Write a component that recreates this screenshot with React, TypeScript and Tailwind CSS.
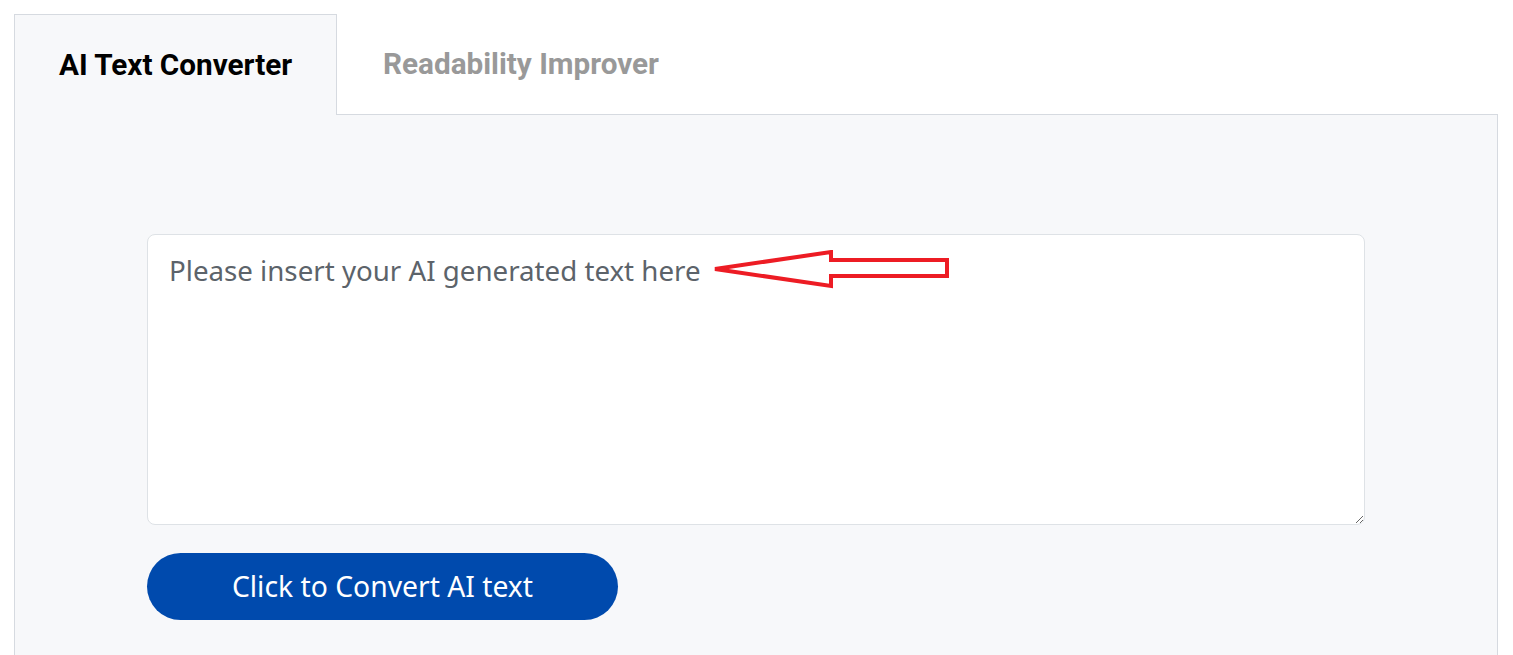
import React from "react";

export default function App() {
  return (
    <div className="min-h-screen bg-white pl-[14px] pt-[14px] pr-[15px]">
      <div className="flex">
        <div className="w-[323px] h-[101px] bg-[#f7f8fa] border-l border-t border-r border-[#d6dae0] flex items-center pl-[44px] pt-[1px] font-['Roboto'] font-bold text-[29.7px] text-black">
          AI Text Converter
        </div>
        <div className="flex-1 h-[101px] border-b border-[#d6dae0] flex items-center pl-[46px] pt-[1px] font-['Roboto'] font-bold text-[29.7px] text-[#999999]">
          Readability Improver
        </div>
      </div>
      <div className="bg-[#f7f8fa] border-l border-r border-[#d6dae0] px-[132px] pt-[119px] pb-[40px]">
        <div className="relative">
          <textarea
            className="block w-full h-[291px] rounded-[8px] border border-[#dee2e6] bg-white px-[21px] py-[16px] font-['Noto_Sans'] text-[27.7px] leading-[38px] text-[#5c636a] placeholder:text-[#5c636a] outline-none resize-y"
            placeholder="Please insert your AI generated text here"
          />
          <svg
            className="absolute left-[566px] top-[16px]"
            width="240"
            height="40"
            viewBox="0 0 240 40"
          >
            <polygon
              points="2,19 118,2 118,10 234,10 234,26 118,26 118,36"
              fill="none"
              stroke="#ed1c24"
              strokeWidth="4"
              strokeLinejoin="miter"
            />
          </svg>
        </div>
        <button className="mt-[28px] w-[471px] h-[67px] rounded-full bg-[#004aad] text-white font-['Noto_Sans'] text-[28.3px]">
          Click to Convert AI text
        </button>
      </div>
    </div>
  );
}
